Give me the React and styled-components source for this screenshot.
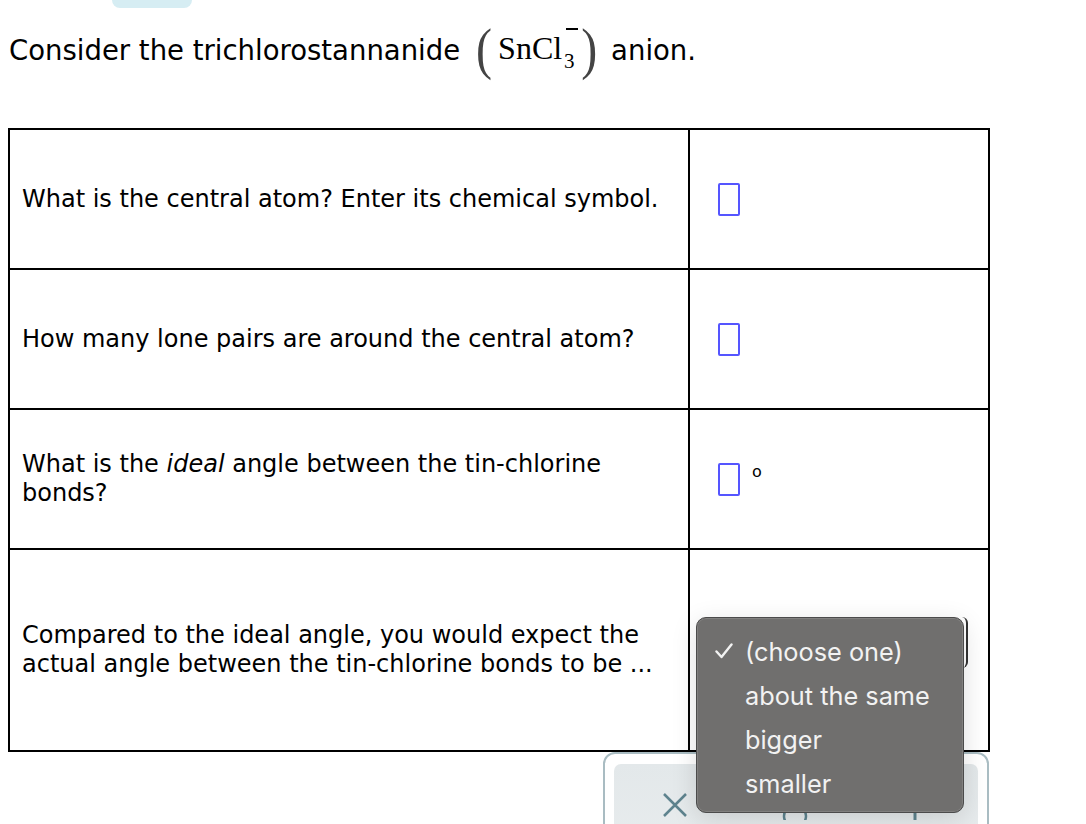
import React from "react";
import styled, { createGlobalStyle } from "styled-components";

const Global = createGlobalStyle`
  html, body { margin: 0; padding: 0; background: #fff; }
  body { width: 1086px; height: 824px; overflow: hidden; }
`;

const Page = styled.div`
  position: relative;
  width: 1086px;
  height: 824px;
  overflow: hidden;
  font-family: "DejaVu Sans", Verdana, sans-serif;
  color: #000;
`;

const Tab = styled.div`
  margin-left: 112px;
  width: 80px;
  height: 8px;
  background: #d6edf3;
  border-radius: 0 0 10px 10px;
`;

const Title = styled.div`
  display: flex;
  align-items: center;
  height: 60px;
  margin-top: 12px;
  padding-left: 9px;
  font-family: "DejaVu Sans", Verdana, sans-serif;
  font-size: 27.5px;
`;

const Formula = styled.span`
  display: inline-flex;
  align-items: center;
  margin: 0 14px 0 16px;
  font-family: "Liberation Serif", "Times New Roman", serif;
  font-size: 32px;
`;

const Paren = styled.span`
  display: inline-block;
  font-family: "Liberation Serif", serif;
  font-size: 48px;
  line-height: 1;
  color: #444;
  transform: scaleY(1.2) translateY(-1px);
  margin: ${(p) => (p.$right ? "0 0 0 6px" : "0 6px 0 0")};
`;

const Chem = styled.span`
  display: inline-block;
  transform: translateY(-2px);
`;

const Sub = styled.span`
  display: inline-flex;
  flex-direction: column;
  align-items: center;
  font-size: 21px;
  line-height: 1;
  margin-left: 1px;
`;

const Minus = styled.span`
  display: block;
  width: 12px;
  height: 1.5px;
  background: #000;
  margin-bottom: 21px;
  transform: translateX(3px);
`;

const SubNum = styled.span`
  display: block;
`;

const Table = styled.div`
  display: grid;
  grid-template-columns: 680px 298px;
  grid-template-rows: 140px 140px 140px 200px;
  margin: 48px 0 0 8px;
  width: 978px;
  border: 2px solid #000;
`;

const Question = styled.div`
  display: flex;
  align-items: center;
  padding: 0 8px 0 12px;
  border-right: 2px solid #000;
  border-bottom: ${(p) => (p.$last ? "none" : "2px solid #000")};
  font-size: 24px;
  line-height: 29px;
`;

const Answer = styled.div`
  position: relative;
  display: flex;
  align-items: center;
  padding-left: 28px;
  border-bottom: ${(p) => (p.$last ? "none" : "2px solid #000")};
`;

const Input = styled.div`
  width: 18px;
  height: 29px;
  border: 2px solid #5555ff;
  border-radius: 2px;
`;

const Degree = styled.span`
  font-size: 16px;
  margin-left: 12px;
  margin-top: -16px;
`;

const SelectEdge = styled.div`
  position: absolute;
  left: 24px;
  top: 67px;
  width: 252px;
  height: 51px;
  border-right: 2px solid #333;
  border-radius: 6px;
`;

const Menu = styled.div`
  position: absolute;
  left: 6px;
  top: 67px;
  z-index: 5;
  width: 268px;
  height: 196px;
  box-sizing: border-box;
  padding-top: 11px;
  background: #706f6e;
  border: 1px solid #4b4b4b;
  border-radius: 10px;
  box-shadow: inset 0 0 0 1px rgba(255, 255, 255, 0.12),
    0 6px 26px rgba(0, 0, 0, 0.13);
  font-family: Inter, "Liberation Sans", sans-serif;
  font-size: 25.3px;
  color: #f2f2f2;
`;

const Item = styled.div`
  display: flex;
  align-items: center;
  height: 44px;
  padding-left: 48px;
  position: relative;
`;

const Check = styled.svg`
  position: absolute;
  left: 18px;
  top: 14px;
`;

const Toolbar = styled.div`
  box-sizing: border-box;
  margin: 0 0 0 603px;
  width: 386px;
  height: 100px;
  padding: 10px 9px;
  border: 2px solid #a9bcc2;
  border-radius: 12px;
  background: #fff;
`;

const ToolInner = styled.div`
  display: flex;
  justify-content: space-between;
  padding: 26px 48px 0 46px;
  height: 80px;
  background: linear-gradient(#e3e8ea, #e9edee);
  border-radius: 7px;
`;

const ToolIcon = styled.div`
  width: 30px;
  height: 30px;
  color: #5e838e;
`;

const rows = [
  { q: "What is the central atom? Enter its chemical symbol." },
  { q: "How many lone pairs are around the central atom?" },
  {
    q: (
      <>
        What is the <i>ideal</i> angle between the tin-chlorine bonds?
      </>
    ),
    deg: true,
  },
];

export default function App() {
  return (
    <Page>
      <Global />
      <Tab />
      <Title>
        Consider the trichlorostannanide
        <Formula>
          <Paren>(</Paren>
          <Chem>SnCl</Chem>
          <Sub>
            <Minus />
            <SubNum>3</SubNum>
          </Sub>
          <Paren $right>)</Paren>
        </Formula>
        anion.
      </Title>
      <Table>
        {rows.map((r, i) => (
          <React.Fragment key={i}>
            <Question>
              <span>{r.q}</span>
            </Question>
            <Answer>
              <Input />
              {r.deg && <Degree>o</Degree>}
            </Answer>
          </React.Fragment>
        ))}
        <Question $last>
          <span>
            Compared to the ideal angle, you would expect the actual angle
            between the tin-chlorine bonds to be ...
          </span>
        </Question>
        <Answer $last>
          <SelectEdge />
          <Menu>
            <Item>
              <Check width="18" height="16" viewBox="0 0 18 16">
                <path
                  d="M1.5 8.5 L6.5 14 L16.5 1.5"
                  stroke="#f2f2f2"
                  strokeWidth="2.4"
                  fill="none"
                  strokeLinecap="round"
                  strokeLinejoin="round"
                />
              </Check>
              (choose one)
            </Item>
            <Item>about the same</Item>
            <Item>bigger</Item>
            <Item>smaller</Item>
          </Menu>
        </Answer>
      </Table>
      <Toolbar>
        <ToolInner>
          <ToolIcon>
            <svg viewBox="0 0 30 30" width="30" height="30">
              <path
                d="M4 4 L26 26 M26 4 L4 26"
                stroke="currentColor"
                strokeWidth="2.5"
                fill="none"
              />
            </svg>
          </ToolIcon>
          <ToolIcon>
            <svg viewBox="0 0 30 30" width="30" height="30">
              <circle
                cx="15"
                cy="26"
                r="11"
                stroke="currentColor"
                strokeWidth="2.5"
                fill="none"
              />
            </svg>
          </ToolIcon>
          <ToolIcon>
            <svg viewBox="0 0 30 30" width="30" height="30">
              <rect x="13.5" y="18" width="3" height="12" fill="currentColor" />
            </svg>
          </ToolIcon>
        </ToolInner>
      </Toolbar>
    </Page>
  );
}
